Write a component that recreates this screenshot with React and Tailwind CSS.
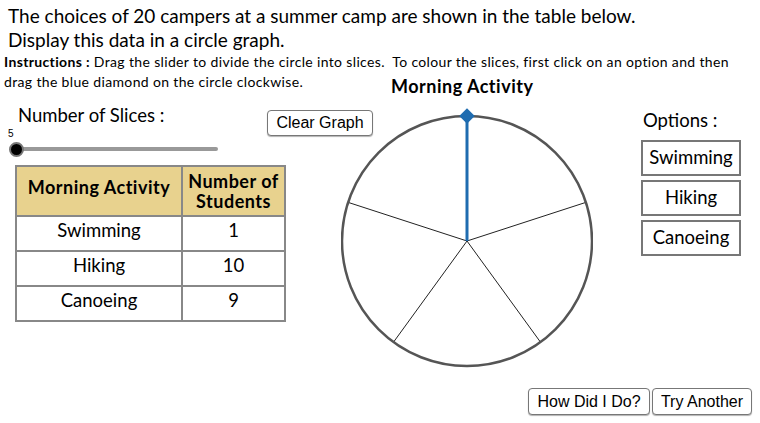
import React from 'react';

const ggb = { fontFamily: 'Lato, "Liberation Sans", sans-serif' };
const arial = { fontFamily: '"Liberation Sans", Arial, sans-serif' };

const rows = [
  ['Swimming', '1'],
  ['Hiking', '10'],
  ['Canoeing', '9'],
];

const options = ['Swimming', 'Hiking', 'Canoeing'];

function PieChart({ slices = 5 }) {
  const cx = 125;
  const cy = 135;
  const r = 125;
  const lines = [];
  for (let i = 1; i < slices; i++) {
    const a = (i * 2 * Math.PI) / slices;
    lines.push([cx + r * Math.sin(a), cy - r * Math.cos(a)]);
  }
  return (
    <svg width="252" height="270" viewBox="-1 0 252 270">
      {lines.map(([x, y], i) => (
        <line key={i} x1={cx} y1={cy} x2={x} y2={y} stroke="#222" strokeWidth="1" />
      ))}
      <circle cx={cx} cy={cy} r={r} fill="none" stroke="#555" strokeWidth="2.5" />
      <line x1={cx} y1={cy} x2={cx} y2={cy - r} stroke="#1f6cb0" strokeWidth="3" />
      <rect x={cx - 5.5} y={cy - r - 5.5} width="11" height="11" fill="#1f6cb0" transform={`rotate(45 ${cx} ${cy - r})`} />
    </svg>
  );
}

export default function App() {
  return (
    <div className="w-[760px] h-[423px] bg-white text-black overflow-hidden" style={ggb}>
      <div className="pt-[4px]">
        <p className="pl-[8px] text-[19px] leading-[24px]">The choices of 20 campers at a summer camp are shown in the table below.</p>
        <p className="pl-[8px] text-[19px] leading-[24px]">Display this data in a circle graph.</p>
        <p className="pl-[4px] text-[14px] tracking-[0.35px] leading-[20px] w-[756px]">
          <span className="font-bold">Instructions :</span> Drag the slider to divide the circle into slices.&nbsp; To colour the slices, first click on an option and then
          <br />
          drag the blue diamond on the circle clockwise.
        </p>
      </div>

      <div className="flex h-[285px] mt-[11px]">
        <div className="w-[267px] shrink-0 pt-[1px]">
          <p className="pl-[18px] text-[18.5px] leading-[22px]">Number of Slices :</p>
          <p className="pl-[8px] text-[10px] leading-[12px] mt-[2px]" style={arial}>5</p>
          <div className="relative h-[16px] mt-[1px]">
            <div className="absolute left-[16px] top-[6px] w-[202px] h-[4px] rounded-full bg-[#999]" />
            <div className="absolute left-[9px] top-[1px] w-[15px] h-[15px] rounded-full bg-black border-[2px] border-[#777]" />
          </div>
          <table className="ml-[15px] mt-[8px] w-[271px] border-collapse border-2 border-[#888] text-[18.5px]">
            <thead>
              <tr className="bg-[#e8d28e] h-[50px]">
                <th className="border-2 border-[#888] w-[166px] pb-[8px] font-bold text-[18px] tracking-[0.5px] leading-[20px]">Morning Activity</th>
                <th className="border-2 border-[#888] font-bold text-[18px] tracking-[0.5px] leading-[20px]">Number of<br />Students</th>
              </tr>
            </thead>
            <tbody>
              {rows.map(([a, n]) => (
                <tr key={a} className="h-[35px]">
                  <td className="border-2 border-[#888] text-center pb-[8px] leading-[20px]">{a}</td>
                  <td className="border-2 border-[#888] text-center pb-[8px] leading-[20px]">{n}</td>
                </tr>
              ))}
            </tbody>
          </table>
        </div>

        <div className="w-[374px] shrink-0 flex flex-col">
          <p className="ml-[124px] mt-[-27px] text-[18px] tracking-[0.5px] leading-[20px] font-bold">Morning Activity</p>
          <button className="mt-[14px] w-[106px] h-[26px] rounded-[4px] border border-[#777] bg-white text-[16px] shadow-[0_1px_1px_rgba(0,0,0,0.3)]" style={arial}>
            Clear Graph
          </button>
          <div className="ml-[74px] mt-[-30px]">
            <PieChart slices={5} />
          </div>
        </div>

        <div className="flex flex-col">
          <p className="pl-[2px] mt-[7px] text-[18.5px] leading-[20px]">Options :</p>
          {options.map((o, i) => (
            <div key={o} className={`w-[100px] h-[36px] border-2 border-[#777] flex items-center justify-center text-[18.5px] ${i === 0 ? 'mt-[10px]' : 'mt-[4px]'}`}>
              {o}
            </div>
          ))}
        </div>
      </div>

      <div className="flex justify-end gap-[2px] pr-[8px]">
        <button className="w-[122px] h-[27px] rounded-[4px] border border-[#777] bg-white text-[16px] shadow-[0_1px_1px_rgba(0,0,0,0.3)]" style={arial}>How Did I Do?</button>
        <button className="w-[100px] h-[27px] rounded-[4px] border border-[#777] bg-white text-[16px] shadow-[0_1px_1px_rgba(0,0,0,0.3)]" style={arial}>Try Another</button>
      </div>
    </div>
  );
}
